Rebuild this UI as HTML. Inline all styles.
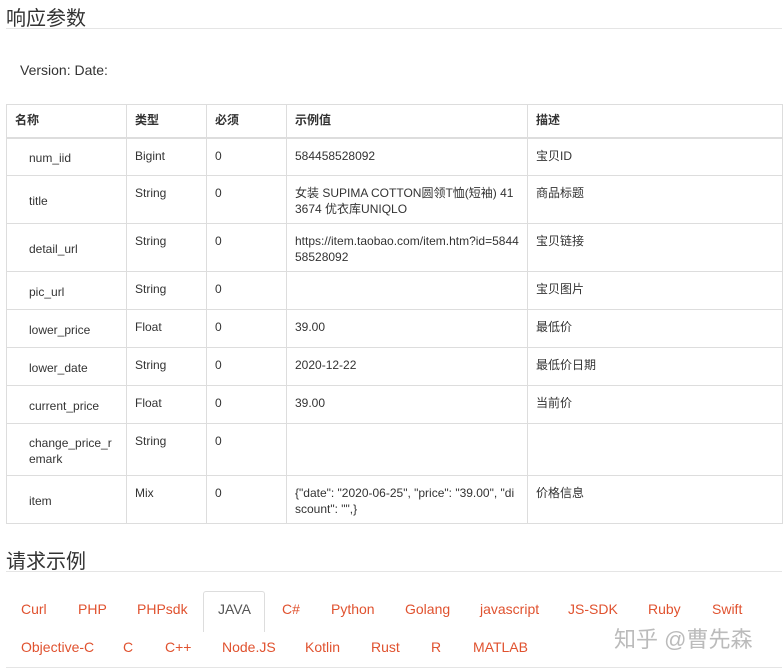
<!DOCTYPE html><html><head><meta charset="utf-8"><style>
body{margin:0;width:784px;height:671px;background:#fff;font-family:"Liberation Sans","Noto Sans CJK SC",sans-serif;color:#333;position:relative;overflow:hidden}
.h{position:absolute;left:6px;font-size:20px;color:#333}
.hr{position:absolute;left:6px;right:2px;height:1px;background:#e5e5e5}
table{position:absolute;left:6px;top:104px;width:777px;border-collapse:collapse;font-size:12px;table-layout:fixed}
td,th{border:1px solid #ddd;vertical-align:top;padding:9px 8px 5px;line-height:16px;text-align:left;word-break:break-all}
th{font-weight:bold;border-bottom:2px solid #ddd;padding:7px 8px 7px}
td.n{padding-left:22px;vertical-align:middle;padding-top:7px}
.t{position:absolute;font-size:14px;color:#e0522f}
</style></head><body>
<div class="h" style="top:2px">响应参数</div>
<div class="hr" style="top:28px"></div>
<div style="position:absolute;left:20px;top:62px;font-size:14px">Version: Date:</div>
<table>
<colgroup><col style="width:120px"><col style="width:80px"><col style="width:80px"><col style="width:241px"><col></colgroup>
<tr style="height:33px"><th>名称</th><th>类型</th><th>必须</th><th>示例值</th><th>描述</th></tr>
<tr style="height:38px"><td class="n">num_iid</td><td>Bigint</td><td>0</td><td>584458528092</td><td>宝贝ID</td></tr>
<tr style="height:48px"><td class="n">title</td><td>String</td><td>0</td><td>女装 SUPIMA COTTON圆领T恤(短袖) 413674 优衣库UNIQLO</td><td>商品标题</td></tr>
<tr style="height:48px"><td class="n">detail_url</td><td>String</td><td>0</td><td>https://item.taobao.com/item.htm?id=584458528092</td><td>宝贝链接</td></tr>
<tr style="height:38px"><td class="n">pic_url</td><td>String</td><td>0</td><td></td><td>宝贝图片</td></tr>
<tr style="height:38px"><td class="n">lower_price</td><td>Float</td><td>0</td><td>39.00</td><td>最低价</td></tr>
<tr style="height:38px"><td class="n">lower_date</td><td>String</td><td>0</td><td>2020-12-22</td><td>最低价日期</td></tr>
<tr style="height:38px"><td class="n">current_price</td><td>Float</td><td>0</td><td>39.00</td><td>当前价</td></tr>
<tr style="height:52px"><td class="n">change_price_remark</td><td>String</td><td>0</td><td></td><td></td></tr>
<tr style="height:48px"><td class="n">item</td><td>Mix</td><td>0</td><td>{"date": "2020-06-25", "price": "39.00", "discount": "",}</td><td>价格信息</td></tr>
</table>
<div class="h" style="top:545px">请求示例</div>
<div class="hr" style="top:571px"></div>
<div style="position:absolute;left:203px;top:591px;width:60px;height:40px;border:1px solid #ddd;border-bottom:none;border-radius:3px 3px 0 0"></div>
<div class="t" style="left:21px;top:601px">Curl</div>
<div class="t" style="left:78px;top:601px">PHP</div>
<div class="t" style="left:137px;top:601px">PHPsdk</div>
<div class="t" style="left:218px;top:601px;color:#555">JAVA</div>
<div class="t" style="left:282px;top:601px">C#</div>
<div class="t" style="left:331px;top:601px">Python</div>
<div class="t" style="left:405px;top:601px">Golang</div>
<div class="t" style="left:480px;top:601px">javascript</div>
<div class="t" style="left:568px;top:601px">JS-SDK</div>
<div class="t" style="left:648px;top:601px">Ruby</div>
<div class="t" style="left:712px;top:601px">Swift</div>
<div class="t" style="left:21px;top:639px">Objective-C</div>
<div class="t" style="left:123px;top:639px">C</div>
<div class="t" style="left:165px;top:639px">C++</div>
<div class="t" style="left:222px;top:639px">Node.JS</div>
<div class="t" style="left:305px;top:639px">Kotlin</div>
<div class="t" style="left:371px;top:639px">Rust</div>
<div class="t" style="left:431px;top:639px">R</div>
<div class="t" style="left:473px;top:639px">MATLAB</div>
<div style="position:absolute;left:614px;top:622px;font-size:22px;color:#bbb">知乎 @曹先森</div>
<div class="hr" style="top:667px"></div>
</body></html>
